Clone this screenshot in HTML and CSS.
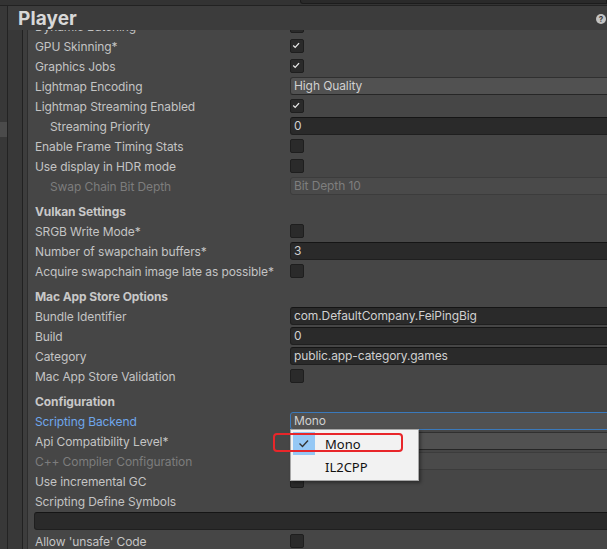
FILE: index.html
```html
<!DOCTYPE html>
<html>
<head>
<meta charset="utf-8">
<link rel="stylesheet" href="styles.css">
</head>
<body>
<div class="topbar"><div class="topspace"></div><div class="topfield"></div></div>
<div class="main">
  <div class="sidebar"><div class="sel"></div></div>
  <div class="inspector">
    <div class="header">
      <span class="title">Player</span>
      <span class="help">?</span>
    </div>
    <div class="body">
      <div class="gutter1"></div>
      <div class="gutter2"></div>
      <div class="content">
        <div class="rows">
          <div class="row first"><span class="label">Dynamic Batching</span><span class="check"></span></div>
          <div class="row"><span class="label">GPU Skinning*</span><span class="check on"><svg viewBox="0 0 14 14"><path d="M3.6 7.4 L5.9 9.6 L10.4 4.6"/></svg></span></div>
          <div class="row"><span class="label">Graphics Jobs</span><span class="check on"><svg viewBox="0 0 14 14"><path d="M3.6 7.4 L5.9 9.6 L10.4 4.6"/></svg></span></div>
          <div class="row"><span class="label">Lightmap Encoding</span><span class="field drop">High Quality</span></div>
          <div class="row"><span class="label">Lightmap Streaming Enabled</span><span class="check on"><svg viewBox="0 0 14 14"><path d="M3.6 7.4 L5.9 9.6 L10.4 4.6"/></svg></span></div>
          <div class="row"><span class="label indent">Streaming Priority</span><span class="field text">0</span></div>
          <div class="row"><span class="label">Enable Frame Timing Stats</span><span class="check"></span></div>
          <div class="row"><span class="label">Use display in HDR mode</span><span class="check"></span></div>
          <div class="row"><span class="label indent disabled">Swap Chain Bit Depth</span><span class="field dis">Bit Depth 10</span></div>

          <div class="section">Vulkan Settings</div>
          <div class="row"><span class="label">SRGB Write Mode*</span><span class="check"></span></div>
          <div class="row"><span class="label">Number of swapchain buffers*</span><span class="field text">3</span></div>
          <div class="row"><span class="label">Acquire swapchain image late as possible*</span><span class="check"></span></div>

          <div class="section">Mac App Store Options</div>
          <div class="row"><span class="label">Bundle Identifier</span><span class="field text">com.DefaultCompany.FeiPingBig</span></div>
          <div class="row"><span class="label">Build</span><span class="field text">0</span></div>
          <div class="row"><span class="label">Category</span><span class="field text">public.app-category.games</span></div>
          <div class="row"><span class="label">Mac App Store Validation</span><span class="check"></span></div>

          <div class="section">Configuration</div>
          <div class="row"><span class="label focus">Scripting Backend</span><span class="field drop active">Mono</span></div>
          <div class="row"><span class="label">Api Compatibility Level*</span><span class="field drop"></span></div>
          <div class="row"><span class="label disabled">C++ Compiler Configuration</span><span class="field dis"></span></div>
          <div class="row"><span class="label">Use incremental GC</span><span class="check"></span></div>
          <div class="row"><span class="label">Scripting Define Symbols</span></div>
          <div class="row"><span class="field text wide"></span></div>
          <div class="row"><span class="label">Allow 'unsafe' Code</span><span class="check"></span></div>
        </div>
      </div>
    </div>
  </div>
</div>

<div class="popup">
  <div class="item selected"><span class="tick"><svg viewBox="0 0 22 23"><path d="M6.5 11.5 L9.5 14.5 L15 8.5"/></svg></span><span class="itext">Mono</span></div>
  <div class="item"><span class="tick"></span><span class="itext">IL2CPP</span></div>
</div>
<div class="annot"></div>
</body>
</html>
```

FILE: styles.css
```css
html, body {
  margin: 0;
  padding: 0;
}
body {
  width: 607px;
  height: 549px;
  overflow: hidden;
  background: #383838;
  font-family: Inter, "Liberation Sans", sans-serif;
  font-size: 12px;
  color: #c4c4c4;
  position: relative;
}
.topbar {
  display: flex;
  height: 5px;
  background: #333333;
  border-bottom: 1px solid #222222;
}
.topspace {
  width: 300px;
}
.topfield {
  flex: 1;
  height: 3px;
  background: #2a2a2a;
  border: 1px solid #1c1c1c;
  border-top: none;
  border-bottom-left-radius: 3px;
}
.main {
  display: flex;
  height: 543px;
}
.sidebar {
  width: 7px;
  background: #383838;
  border-right: 1px solid #232323;
  flex: none;
}
.sel {
  margin-top: 116px;
  height: 15px;
  background: #4b4b4b;
}
.inspector {
  flex: 1;
  display: flex;
  flex-direction: column;
  min-width: 0;
}
.header {
  height: 24px;
  flex: none;
  background: #3c3c3c;
  display: flex;
  align-items: center;
  justify-content: space-between;
  padding-left: 10px;
}
.title {
  font-weight: 700;
  font-size: 19px;
  color: #d8d8d8;
  letter-spacing: 0.1px;
}
.help {
  width: 10px;
  height: 10px;
  border-radius: 50%;
  background: #c2c2c2;
  color: #3a3a3a;
  font-size: 8px;
  font-weight: 700;
  line-height: 10px;
  text-align: center;
  margin-right: 1px;
  margin-top: 2px;
}
.body {
  flex: 1;
  display: flex;
  min-height: 0;
}
.gutter1 {
  width: 14px;
  flex: none;
  background: #383838;
  border-right: 1px solid #212121;
}
.gutter2 {
  width: 4px;
  flex: none;
  background: #3d3d3d;
  border-right: 1px solid #2e2e2e;
}
.content {
  flex: 1;
  background: #464646;
  overflow: hidden;
  padding-left: 7px;
  min-width: 0;
}
.rows {
  margin-top: -14px;
  margin-right: -20px;
  letter-spacing: -0.1px;
}
.row {
  display: flex;
  align-items: center;
  height: 20px;
}
.label {
  width: 255px;
  flex: none;
  white-space: nowrap;
}
.label.indent {
  width: 240px;
  padding-left: 15px;
}
.label.disabled {
  color: #7d7d7d;
}
.label.focus {
  color: #6fa6ec;
}
.section {
  height: 25px;
  box-sizing: border-box;
  padding-top: 9px;
  font-weight: 700;
  color: #c8c8c8;
  line-height: 14px;
}
.check {
  width: 12px;
  height: 12px;
  background: #2a2a2a;
  border: 1px solid #1e1e1e;
  border-radius: 2px;
  flex: none;
  display: flex;
}
.check svg {
  width: 12px;
  height: 12px;
  margin: 0;
}
.check path {
  fill: none;
  stroke: #e6e6e6;
  stroke-width: 1.6;
  transform: translate(-1px, -1px);
}
.field {
  flex: 1;
  height: 16px;
  line-height: 16px;
  border: 1px solid #212121;
  border-radius: 3px;
  padding-left: 3px;
  white-space: nowrap;
  color: #d0d0d0;
}
.field.text {
  background: #2a2a2a;
  border-color: #1f1f1f;
  border-top-color: #151515;
}
.field.drop {
  background: #515151;
  border-color: #303030;
  border-bottom-color: #262626;
}
.field.drop.active {
  border-color: #3a79bb;
}
.field.dis {
  background: #4a4a4a;
  border-color: #3c3c3c;
  color: #7e7e7e;
}
.field.wide {
  margin-left: -1px;
}
.popup {
  position: absolute;
  left: 290px;
  top: 429px;
  width: 123px;
  padding: 2px;
  background: #f2f2f2;
  border: 1px solid #a7a7a7;
  box-shadow: 2px 2px 3px rgba(0, 0, 0, 0.35);
  font-family: "Noto Sans", "Open Sans", sans-serif;
  font-size: 13px;
  color: #111111;
}
.item {
  display: flex;
  align-items: center;
  height: 23px;
}
.tick {
  width: 22px;
  height: 23px;
  flex: none;
  margin-right: 10px;
}
.item.selected .tick {
  background: #95c8f5;
}
.tick svg {
  width: 22px;
  height: 23px;
  display: block;
}
.tick path {
  fill: none;
  stroke: #333333;
  stroke-width: 1.4;
}
.annot {
  position: absolute;
  left: 273px;
  top: 433px;
  width: 126px;
  height: 15px;
  border: 2.5px solid #e8262a;
  border-radius: 4px;
}
```
